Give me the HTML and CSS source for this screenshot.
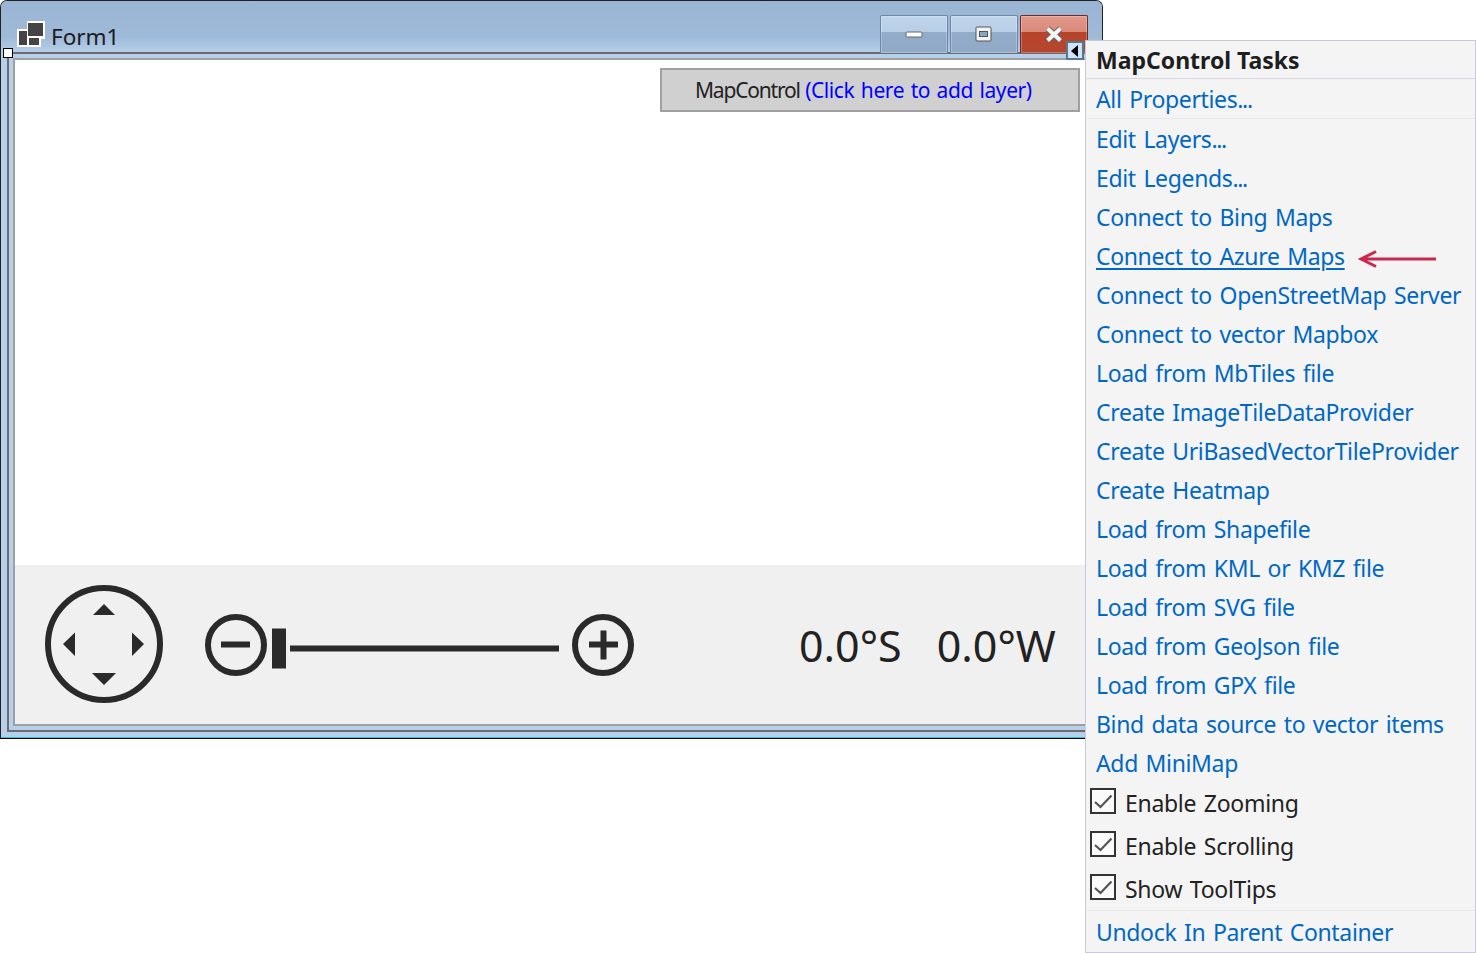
FILE: index.html
```html
<!DOCTYPE html>
<html lang="en">
<head>
<meta charset="utf-8">
<title>Form1 - MapControl Tasks</title>
<link rel="stylesheet" href="styles.css">
</head>
<body>
<div class="desktop">
  <section class="window">
    <header class="titlebar">
      <svg class="form-icon" width="29" height="27" viewBox="0 0 29 27">
        <rect x="10" y="0" width="18" height="18" fill="#fff"/>
        <rect x="0" y="8" width="24" height="18" fill="#fff"/>
        <rect x="11" y="2" width="15" height="13" fill="#444"/>
        <rect x="2" y="10" width="8" height="14" fill="#444"/>
        <rect x="12" y="17" width="10" height="7" fill="#444"/>
      </svg>
      <span class="form-title">Form1</span>
      <div class="caption-buttons">
        <div class="caption-btn">
          <svg width="20" height="20" viewBox="0 0 20 20"><rect x="2" y="7" width="16" height="5" rx="1" fill="#fff" stroke="#666"/></svg>
        </div>
        <div class="caption-btn">
          <svg width="20" height="20" viewBox="0 0 20 20"><rect x="2" y="2" width="15" height="14" rx="1" fill="#f4f4f4" stroke="#555"/><rect x="5.500" y="6.500" width="8" height="5" fill="#8aa5c4" stroke="#555"/></svg>
        </div>
        <div class="caption-btn caption-close">
          <svg width="20" height="20" viewBox="0 0 20 20"><path d="M3.500 3.500 L16.500 15.500 M16.500 3.500 L3.500 15.500" stroke="#666" stroke-width="6" fill="none"/><path d="M3.500 3.500 L16.500 15.500 M16.500 3.500 L3.500 15.500" stroke="#f4f4f4" stroke-width="4" fill="none"/></svg>
        </div>
      </div>
    </header>
    <div class="frame">
      <div class="client">
        <div class="map-area">
          <div class="map-banner"><span class="map-name">MapControl</span> <span class="map-add">(Click here to add layer)</span></div>
        </div>
        <div class="nav-panel">
          <svg class="compass" width="118" height="118" viewBox="0 0 118 118">
            <circle cx="59" cy="59" r="56" fill="none" stroke="#2a2a2a" stroke-width="6"/>
            <path d="M59 19 L70 30 L48 30 Z M47 88 L71 88 L59 100 Z M18 59 L30 47.500 L30 71 Z M87 47.500 L99 59 L87 71 Z" fill="#2a2a2a"/>
          </svg>
          <svg class="zoomer" width="430" height="64" viewBox="0 0 430 64">
            <circle cx="31" cy="32" r="28" fill="none" stroke="#2a2a2a" stroke-width="6"/>
            <rect x="16" y="28.500" width="29" height="6" fill="#2a2a2a"/>
            <rect x="67" y="15.500" width="14" height="40" fill="#2a2a2a"/>
            <rect x="85" y="32.500" width="269" height="6" fill="#2a2a2a"/>
            <circle cx="398" cy="32" r="28" fill="none" stroke="#2a2a2a" stroke-width="6"/>
            <rect x="384" y="28.500" width="29" height="6" fill="#2a2a2a"/>
            <rect x="395.500" y="17.500" width="6" height="29" fill="#2a2a2a"/>
          </svg>
          <div class="coords"><span>0.0°S</span><span>0.0°W</span></div>
        </div>
      </div>
    </div>
  </section>

  <div class="handle"></div>
  <div class="smart-tag">
    <svg width="10" height="14" viewBox="0 0 10 14"><path d="M8 1 L8 13 L1 7 Z" fill="#000"/></svg>
  </div>

  <aside class="tasks">
    <h1 class="tasks-title">MapControl Tasks</h1>
    <div class="group group-first"><a class="task">All Properties<span class="dots">...</span></a></div>
    <div class="group">
      <a class="task">Edit Layers<span class="dots">...</span></a>
      <a class="task">Edit Legends<span class="dots">...</span></a>
      <a class="task">Connect to Bing Maps</a>
      <a class="task task-hot">Connect to Azure Maps</a>
      <a class="task">Connect to OpenStreetMap Server</a>
      <a class="task">Connect to vector Mapbox</a>
      <a class="task">Load from MbTiles file</a>
      <a class="task">Create ImageTileDataProvider</a>
      <a class="task">Create UriBasedVectorTileProvider</a>
      <a class="task">Create Heatmap</a>
      <a class="task">Load from Shapefile</a>
      <a class="task">Load from KML or KMZ file</a>
      <a class="task">Load from SVG file</a>
      <a class="task">Load from GeoJson file</a>
      <a class="task">Load from GPX file</a>
      <a class="task">Bind data source to vector items</a>
      <a class="task">Add MiniMap</a>
    </div>
    <div class="checks">
      <div class="check"><svg class="box" width="26" height="26" viewBox="0 0 22 22"><path d="M3 12 L8.500 17 L19.500 5.500" fill="none" stroke="#555" stroke-width="2.200"/></svg><span>Enable Zooming</span></div>
      <div class="check"><svg class="box" width="26" height="26" viewBox="0 0 22 22"><path d="M3 12 L8.500 17 L19.500 5.500" fill="none" stroke="#555" stroke-width="2.200"/></svg><span>Enable Scrolling</span></div>
      <div class="check"><svg class="box" width="26" height="26" viewBox="0 0 22 22"><path d="M3 12 L8.500 17 L19.500 5.500" fill="none" stroke="#555" stroke-width="2.200"/></svg><span>Show ToolTips</span></div>
    </div>
    <div class="group group-last"><a class="task">Undock In Parent Container</a></div>
  </aside>

  <svg class="arrow" width="82" height="20" viewBox="0 0 82 20">
    <path d="M5 10 H80 M20 2.500 L5 10 L20 17.500" fill="none" stroke="#c9294f" stroke-width="3"/>
  </svg>
</div>
</body>
</html>
```

FILE: styles.css
```css
html, body {
  margin: 0;
  padding: 0;
  background: #fff;
}
.desktop {
  position: relative;
  width: 1476px;
  height: 953px;
  overflow: hidden;
  font-family: "Noto Sans", "Open Sans", sans-serif;
}
.window {
  position: absolute;
  left: 0;
  top: 0;
  width: 1103px;
  height: 739px;
  box-sizing: border-box;
  border: 1px solid #222;
  border-bottom-color: #000;
  border-radius: 7px 7px 0 0;
  background: #b6cfeb;
  box-shadow: inset 0 -1px #35c4d8;
  overflow: hidden;
}
.titlebar {
  display: flex;
  align-items: flex-start;
  height: 51px;
  padding-left: 16px;
  box-sizing: border-box;
  background: linear-gradient(#9ab5d3 0, #9fbad8 70%, #b5cee9 100%);
}
.form-icon {
  margin-top: 20px;
}
.form-title {
  margin-left: 5px;
  margin-top: 20px;
  font-size: 22.500px;
  line-height: 32px;
  color: #1c1c1c;
}
.caption-buttons {
  display: flex;
  gap: 2px;
  margin-left: auto;
  margin-right: 14px;
  margin-top: 14px;
}
.caption-btn {
  display: flex;
  align-items: center;
  justify-content: center;
  width: 68px;
  height: 38px;
  box-sizing: border-box;
  border: 1px solid #6f87a6;
  border-bottom: 0;
  border-radius: 2px 2px 0 0;
  background: linear-gradient(#bfd4ea 0, #b9cfe7 42%, #93acc9 42%, #90a9c6 100%);
  box-shadow: inset 0 0 0 1px rgba(255, 255, 255, .25);
}
.caption-close {
  border-color: #6d2a2a;
  background: linear-gradient(#e3988a 0, #d98a7a 42%, #b8432a 42%, #b5472f 100%);
}
.frame {
  margin-left: 6px;
  height: 680px;
  box-sizing: border-box;
  border: solid #6d6d6d;
  border-width: 2px 0 2px 2px;
  padding: 4px 0 4px 4px;
}
.client {
  display: flex;
  flex-direction: column;
  height: 100%;
  box-sizing: border-box;
  border: solid #a0a0a0;
  border-width: 2px 0 2px 2px;
}
.map-area {
  display: flex;
  justify-content: flex-end;
  align-items: flex-start;
  flex: 1;
  padding: 8px 22px 0 0;
  background: #fff;
}
.map-banner {
  width: 420px;
  height: 44px;
  box-sizing: border-box;
  border: 2px solid #a0a0a0;
  background: #d0d0d0;
  padding-left: 33px;
  font-size: 21px;
  line-height: 40px;
  white-space: nowrap;
}
.map-name {
  color: #222;
  letter-spacing: -1.2px;
}
.map-add {
  color: #0000ff;
  letter-spacing: -.42px;
  word-spacing: 1.500px;
}
.nav-panel {
  display: flex;
  align-items: center;
  height: 159px;
  flex: none;
  padding-left: 30px;
  background: #f0f0f0;
}
.compass {
  flex: none;
  margin-bottom: 1px;
}
.zoomer {
  flex: none;
  margin-left: 42px;
}
.coords {
  display: flex;
  gap: 35px;
  margin-left: 164px;
  margin-top: 2px;
  font-size: 43px;
  line-height: 56px;
  color: #222;
  white-space: nowrap;
}
.handle {
  position: absolute;
  left: 3px;
  top: 48px;
  width: 10px;
  height: 10px;
  box-sizing: border-box;
  border: 1px solid #000;
  background: #fff;
}
.smart-tag {
  position: absolute;
  left: 1066px;
  top: 41px;
  width: 18px;
  height: 19px;
  box-sizing: border-box;
  border: 2px solid #56788c;
  background: #cfe4f8;
  display: flex;
  align-items: center;
  justify-content: center;
}
.tasks {
  position: absolute;
  left: 1085px;
  top: 40px;
  width: 391px;
  height: 913px;
  box-sizing: border-box;
  border: 1px solid #c9c9dd;
  background: #f4f4f4;
  color: #222;
  font-size: 23px;
}
.tasks-title {
  margin: 0;
  height: 38px;
  box-sizing: border-box;
  border-bottom: 1px solid #d9d9e6;
  padding-left: 10px;
  font-size: 23px;
  font-weight: 700;
  line-height: 38px;
  color: #1e1e1e;
}
.group {
  display: flex;
  flex-direction: column;
}
.group-first {
  height: 40px;
  box-sizing: border-box;
  border-bottom: 1px solid #e8e8e8;
}
.group-last {
  border-top: 1px solid #e8e8e8;
  margin-top: -1px;
}
.group-last .task {
  padding-top: 1px;
  line-height: 41px;
}
.task {
  display: block;
  padding-top: 1px;
  margin-bottom: -1px;
  padding-left: 10px;
  line-height: 39px;
  color: #0068c4;
  white-space: nowrap;
  letter-spacing: -.35px;
  word-spacing: 2px;
}
.dots {
  letter-spacing: -1.400px;
}
.task-hot {
  text-decoration: underline;
  text-decoration-thickness: 1.500px;
  text-underline-offset: 3px;
}
.checks {
  display: flex;
  flex-direction: column;
}
.check {
  display: flex;
  align-items: center;
  gap: 9px;
  height: 43px;
  box-sizing: border-box;
  padding: 0 0 2px 4px;
  color: #222;
  letter-spacing: -.3px;
  word-spacing: 2px;
  white-space: nowrap;
}
.box {
  flex: none;
  box-sizing: border-box;
  border: 2px solid #333;
  background: #fafafa;
  margin-bottom: 4px;
}
.arrow {
  position: absolute;
  left: 1356px;
  top: 249px;
}
```
